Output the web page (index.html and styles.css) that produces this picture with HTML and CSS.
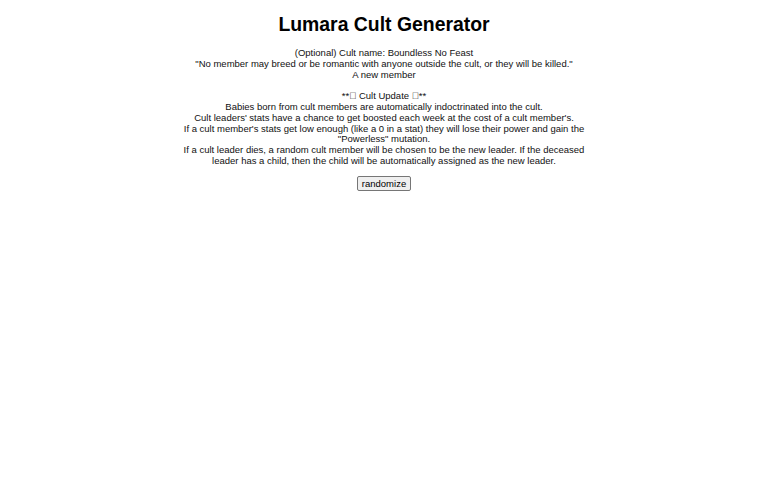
FILE: index.html
```html
<!DOCTYPE html>
<html lang="en">
<head>
    <meta charset="UTF-8">
    <meta name="viewport" content="width=device-width, initial-scale=1.0">
    <title>Lumara Cult Generator</title>
    <link rel="stylesheet" href="styles.css">
</head>
<body>
    <div class="container">
        <h1>Lumara Cult Generator</h1>
        <div class="output" id="output">
            <div>(Optional) Cult name: Boundless No Feast</div>
            <div>"No member may breed or be romantic with anyone outside the cult, or they will be killed."</div>
            <div>A new member</div>
            <br>
            <div>**&#xE000; Cult Update &#xE000;**</div>
            <div>Babies born from cult members are automatically indoctrinated into the cult.</div>
            <div>Cult leaders' stats have a chance to get boosted each week at the cost of a cult member's.</div>
            <div>If a cult member's stats get low enough (like a 0 in a stat) they will lose their power and gain the "Powerless" mutation.</div>
            <div>If a cult leader dies, a random cult member will be chosen to be the new leader. If the deceased leader has a child, then the child will be automatically assigned as the new leader.</div>
        </div>
        <button class="randomize-btn" onclick="randomize()">randomize</button>
    </div>

    <script>
        function randomize() {
        }
    </script>
</body>
</html>
```

FILE: styles.css
```css
body {
    font-family: 'Liberation Sans', Arial, sans-serif;
    text-align: center;
    color: #000;
    background: #fff;
    margin: 0;
    padding: 0;
}

.container {
    width: 402px;
    margin: 0 auto;
    padding-top: 13px;
}

h1 {
    font-size: 19.4px;
    font-weight: bold;
    margin: 0 0 13px 0;
    line-height: 22px;
}

.output {
    font-size: 9.5px;
    line-height: 10.8px;
    color: #111;
}

.output br {
    display: block;
    content: "";
    height: 10.8px;
}

.randomize-btn {
    font-family: 'Liberation Sans', Arial, sans-serif;
    font-size: 9.5px;
    margin-top: 9px;
    padding: 1px 4px;
    background: #efefef;
    border: 1px solid #767676;
    border-radius: 2px;
    color: #000;
}
```
